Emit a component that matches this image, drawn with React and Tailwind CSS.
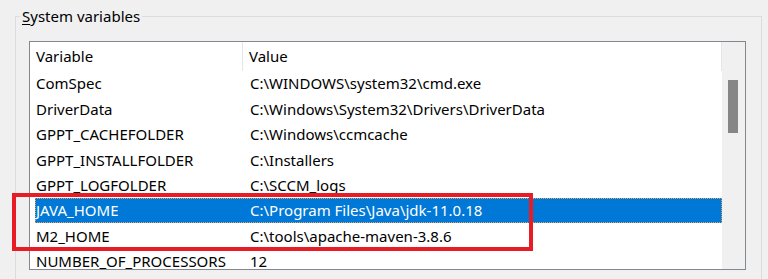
import React from "react";

const rows = [
  ["ComSpec", "C:\\WINDOWS\\system32\\cmd.exe"],
  ["DriverData", "C:\\Windows\\System32\\Drivers\\DriverData"],
  ["GPPT_CACHEFOLDER", "C:\\Windows\\ccmcache"],
  ["GPPT_INSTALLFOLDER", "C:\\Installers"],
  ["GPPT_LOGFOLDER", "C:\\SCCM_logs"],
  ["JAVA_HOME", "C:\\Program Files\\Java\\jdk-11.0.18"],
  ["M2_HOME", "C:\\tools\\apache-maven-3.8.6"],
  ["NUMBER_OF_PROCESSORS", "12"],
];

function App() {
  return (
    <div
      className="relative w-[768px] h-[279px] overflow-hidden bg-[#f0f0f0] text-[15px] text-black"
      style={{ fontFamily: '"Noto Sans", "Open Sans", sans-serif' }}
    >
      <fieldset className="ml-[15px] mt-[6px] w-[747px] h-[320px] border border-[#dcdcdc]">
        <legend className="ml-[4px] px-[2px] leading-[20px]">
          <span className="underline underline-offset-2">S</span>ystem variables
        </legend>

        <div className="ml-[13px] mt-[15px] w-[717px] h-[229px] border border-[#828790] bg-white flex overflow-hidden">
          <div className="w-[692px] flex flex-col">
            {/* header */}
            <div className="h-[29px] flex items-center shrink-0">
              <div className="w-[213px] h-full pl-[6px] flex items-center border-r border-[#e5e5e5]">
                Variable
              </div>
              <div className="flex-1 h-full pl-[6px] flex items-center border-r border-[#e5e5e5]">
                Value
              </div>
            </div>

            {rows.map(([name, value]) => {
              const sel = name === "JAVA_HOME";
              return (
                <div
                  key={name}
                  className={
                    sel
                      ? "ml-[5px] h-[25.4px] shrink-0 flex items-center bg-[#0078d7] text-white border border-dotted border-[#d9a35c]"
                      : "ml-[5px] h-[25.4px] shrink-0 flex items-center border border-transparent"
                  }
                >
                  <div className="w-[214px] whitespace-nowrap">{name}</div>
                  <div className="whitespace-nowrap">{value}</div>
                </div>
              );
            })}
          </div>

          {/* scrollbar */}
          <div className="w-[23px] bg-[#f0f0f0] pt-[38px] pl-[6px]">
            <div className="w-[10px] h-[53px] bg-[#868686]" />
          </div>
        </div>
      </fieldset>

      {/* annotation */}
      <div className="absolute left-[12px] top-[193px] w-[521px] h-[58px] border-4 border-[#e81c24]" />
    </div>
  );
}

export default App;
